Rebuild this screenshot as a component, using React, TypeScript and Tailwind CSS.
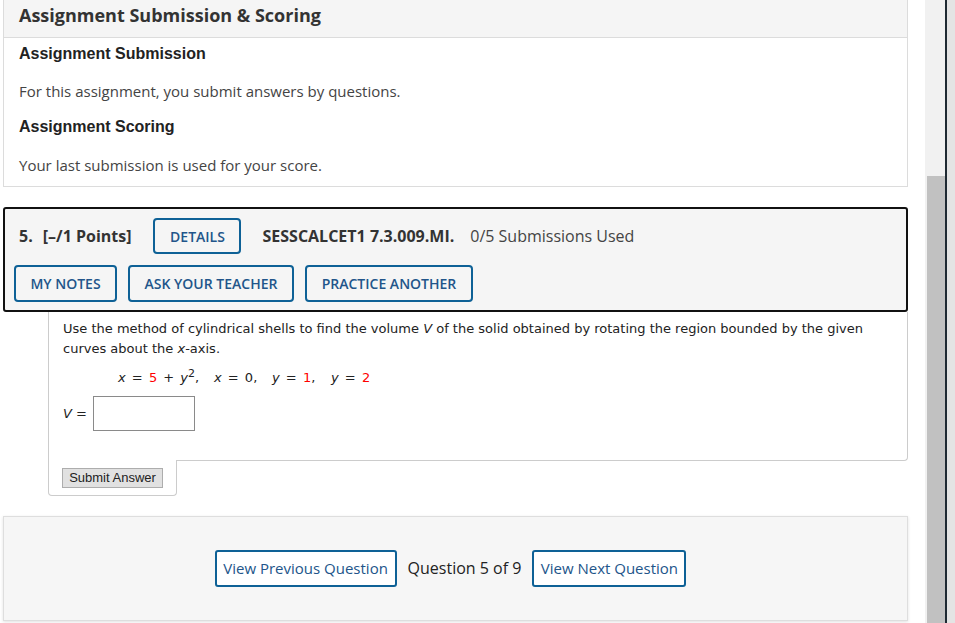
import React from 'react'

const openSans = { fontFamily: '"Open Sans", "Liberation Sans", sans-serif' }

const OutlineButton: React.FC<{ width: string; height?: string; children: React.ReactNode }> = ({
  width,
  height = 'h-[37px]',
  children
}) => (
  <button
    type="button"
    className={`${width} ${height} shrink-0 rounded-[4px] border-2 border-[#0e6196] bg-transparent text-[14px] font-semibold text-[#22558a]`}
  >
    {children}
  </button>
)

const Red: React.FC<{ children: React.ReactNode }> = ({ children }) => (
  <span className="text-[#ff0000]">{children}</span>
)

export default function App() {
  return (
    <div className="flex h-[623px] w-[955px] overflow-hidden bg-white" style={openSans}>
      {/* Page content */}
      <div className="w-[925px] shrink-0 pl-[3px] pr-[17px]">
        {/* Assignment Submission & Scoring */}
        <div className="border-x border-b border-[#dcdcdc]">
          <div className="h-[38px] border-b border-[#dcdcdc] bg-[#f5f5f5] pl-[15px] pt-[2px]">
            <h1 className="text-[18px] font-bold leading-[26px] text-[#333]">
              Assignment Submission &amp; Scoring
            </h1>
          </div>
          <div className="pb-[11px] pl-[15px] pt-[6px]">
            <h2
              className="text-[16px] font-bold leading-[20px] text-[#222]"
              style={{ fontFamily: '"Liberation Sans", Arial, sans-serif' }}
            >
              Assignment Submission
            </h2>
            <p className="mt-[17px] text-[15px] leading-[20px] text-[#444]">
              For this assignment, you submit answers by questions.
            </p>
            <h2
              className="mt-[16px] text-[16px] font-bold leading-[20px] text-[#222]"
              style={{ fontFamily: '"Liberation Sans", Arial, sans-serif' }}
            >
              Assignment Scoring
            </h2>
            <p className="mt-[18px] text-[15px] leading-[20px] text-[#444]">
              Your last submission is used for your score.
            </p>
          </div>
        </div>

        {/* Question header */}
        <div className="mt-[20px] rounded-[3px] border-2 border-[#111] bg-[#f5f5f5] pb-[8px] pt-[9px]">
          <div className="flex items-center pl-[14px]">
            <span className="text-[16px] font-bold text-[#333]">5.</span>
            <span className="ml-[10px] text-[16px] font-bold text-[#333]">[–/1 Points]</span>
            <div className="ml-[22px]">
              <OutlineButton width="w-[88px]" height="h-[36px]">
                DETAILS
              </OutlineButton>
            </div>
            <span className="ml-[21px] text-[16px] font-bold text-[#333]">SESSCALCET1 7.3.009.MI.</span>
            <span className="ml-[16px] text-[16px] text-[#444]">0/5 Submissions Used</span>
          </div>
          <div className="mt-[11px] flex gap-[11px] pl-[9px]">
            <OutlineButton width="w-[103px]">MY NOTES</OutlineButton>
            <OutlineButton width="w-[166px]">ASK YOUR TEACHER</OutlineButton>
            <OutlineButton width="w-[168px]">PRACTICE ANOTHER</OutlineButton>
          </div>
        </div>

        {/* Question body */}
        <div className="ml-[45px]" style={{ fontFamily: '"DejaVu Sans", Verdana, sans-serif' }}>
          <div className="h-[149px] rounded-br-[4px] border-x border-b border-[#cccccc] bg-white pl-[14px] pt-[7px]">
            <p className="text-[13px] leading-[20px] text-[#222]">
              Use the method of cylindrical shells to find the volume <i>V</i> of the solid obtained by rotating
              the region bounded by the given curves about the <i>x</i>-axis.
            </p>
            <div className="ml-[55px] mt-[9px] flex whitespace-nowrap text-[13px] leading-[20px] text-[#222] [word-spacing:2px]">
              <span className="w-[96px]">
                <i>x</i> = <Red>5</Red> + <i>y</i>
                <sup className="text-[11px]">2</sup>,
              </span>
              <span className="w-[58px]">
                <i>x</i> = 0,
              </span>
              <span className="w-[59px]">
                <i>y</i> = <Red>1</Red>,
              </span>
              <span>
                <i>y</i> = <Red>2</Red>
              </span>
            </div>
            <div className="mt-[8px] flex items-center">
              <span className="text-[13px] text-[#222]">
                <i>V</i> =
              </span>
              <input
                type="text"
                className="ml-[6px] h-[35px] w-[102px] border border-[#8a8a8a] bg-white outline-none"
              />
            </div>
          </div>
          <div className="-mt-px flex h-[36px] w-[129px] items-start rounded-b-[4px] border-x border-b border-[#cccccc] bg-white pl-[13px] pt-[8px]">
            <button
              type="button"
              className="h-[20px] w-[101px] border border-[#adadad] bg-[#e1e1e1] text-[13px] leading-[18px] text-[#222]"
              style={{ fontFamily: '"Liberation Sans", Arial, sans-serif' }}
            >
              Submit Answer
            </button>
          </div>
        </div>

        {/* Navigation */}
        <div className="mt-[20px] flex h-[105px] items-center justify-center gap-[11px] border border-[#dedede] bg-[#f6f6f6] pr-[10px] shadow-[0_1px_3px_rgba(0,0,0,0.12)]">
          <button
            type="button"
            className="h-[37px] w-[182px] rounded-[3px] border-2 border-[#0e6196] bg-white text-[15px] text-[#22558a]"
          >
            View Previous Question
          </button>
          <span className="-mt-[2px] text-[16px] text-[#222]">Question 5 of 9</span>
          <button
            type="button"
            className="h-[37px] w-[154px] rounded-[3px] border-2 border-[#0e6196] bg-white text-[15px] text-[#22558a]"
          >
            View Next Question
          </button>
        </div>
      </div>

      {/* Scrollbar */}
      <div className="flex w-[20px] shrink-0 flex-col bg-[#f1f1f1] pl-[2px]">
        <div className="mt-[176px] flex-1 bg-[#c1c1c1]" />
      </div>
      <div className="w-[2px] shrink-0 bg-[#1f2a33]" />
      <div className="flex-1 bg-[#e4e4e4]" />
    </div>
  )
}
